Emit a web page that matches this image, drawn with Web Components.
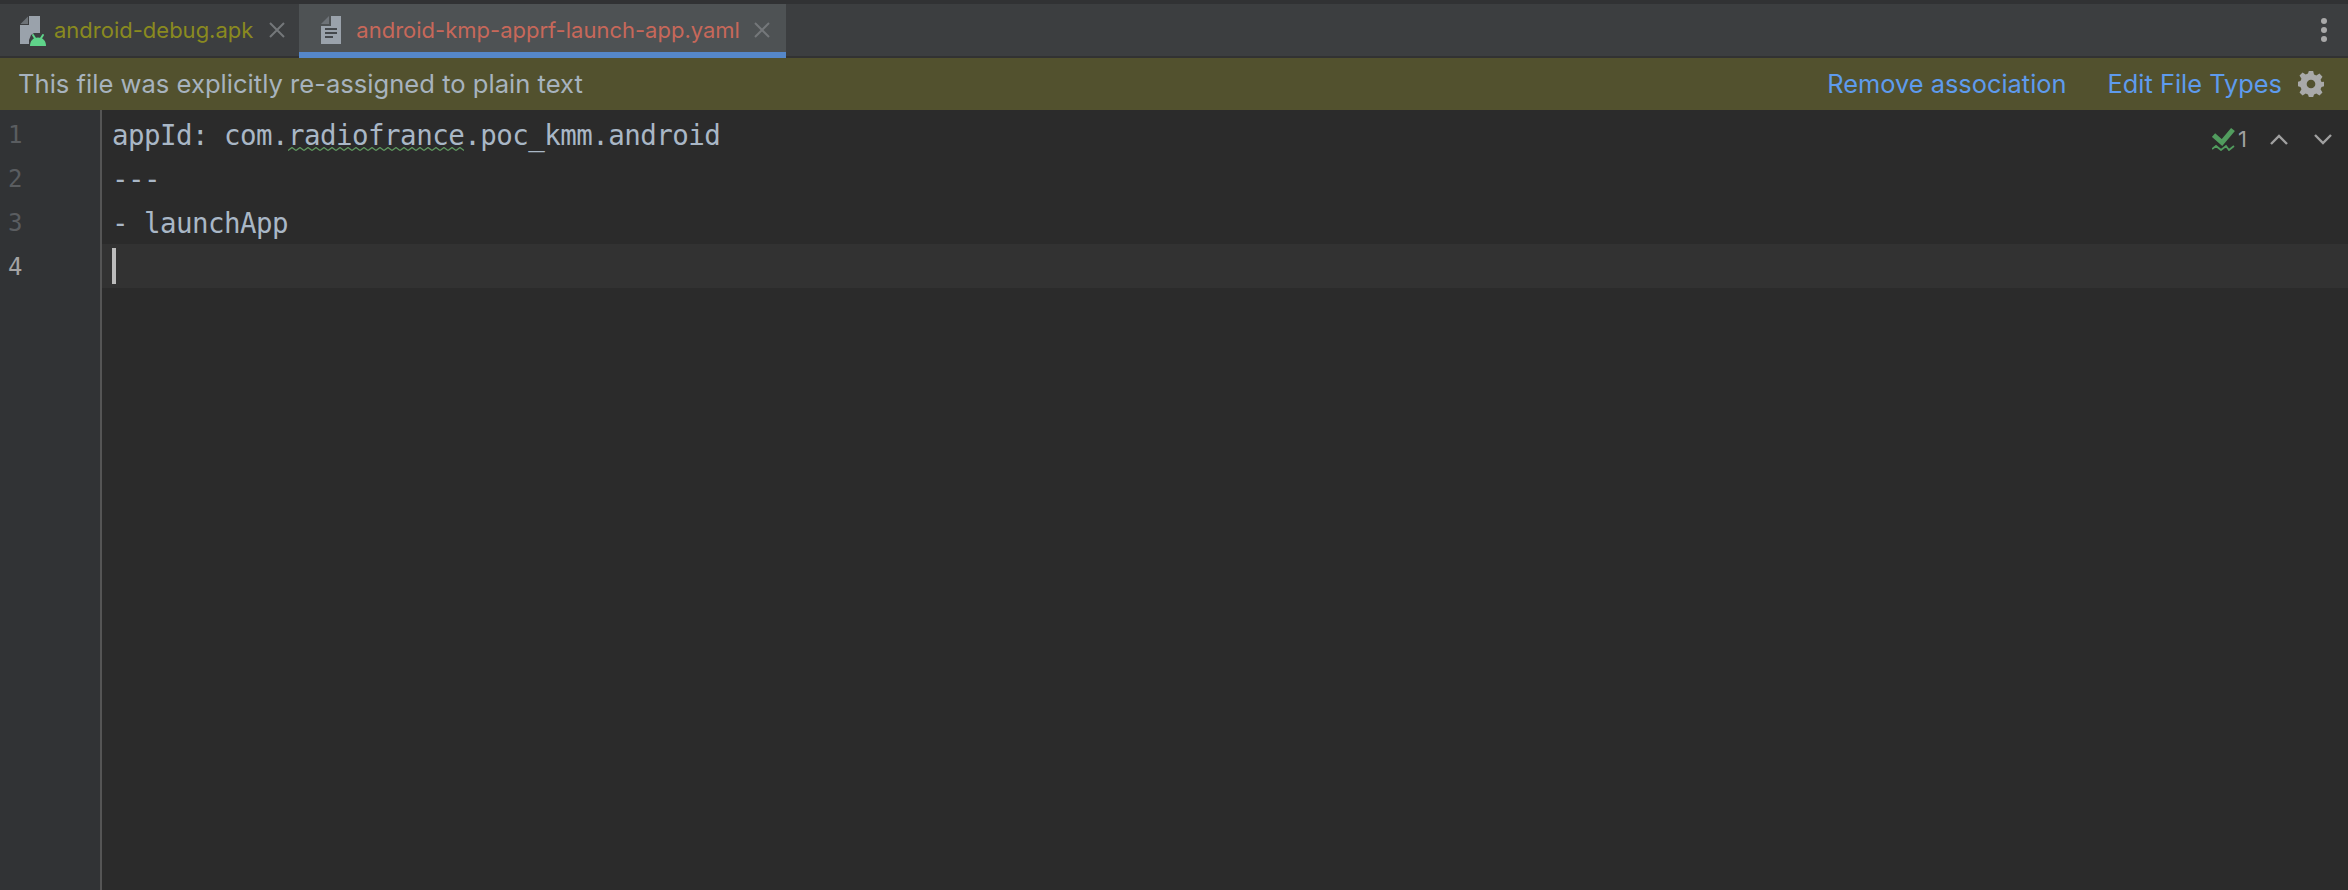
<!DOCTYPE html>
<html>
<head>
<meta charset="utf-8">
<title>android-kmp-apprf-launch-app.yaml</title>
<style>
  html, body { margin: 0; height: 100%; background: #2b2b2b; overflow: hidden; }
</style>
</head>
<body>
<ide-window>
  <ide-tab-bar>
    <ide-tab kind="apk" color="#8a8a1f">android-debug.apk</ide-tab>
    <ide-tab kind="text" color="#c7685a" active>android-kmp-apprf-launch-app.yaml</ide-tab>
  </ide-tab-bar>
  <ide-banner>
    This file was explicitly re-assigned to plain text
    <ide-link slot="actions" style="margin-right:41px">Remove association</ide-link>
    <ide-link slot="actions">Edit File Types</ide-link>
  </ide-banner>
  <ide-editor>
    <ide-line num="1">appId: com.<ide-squiggle>radiofrance</ide-squiggle>.poc_kmm.android</ide-line>
    <ide-line num="2">---</ide-line>
    <ide-line num="3">- launchApp</ide-line>
    <ide-line num="4" current></ide-line>
  </ide-editor>
</ide-window>

<script>
  const UI_FONT = "Inter, 'Open Sans', 'Liberation Sans', sans-serif"
  const CODE_FONT = "'DejaVu Sans Mono', 'Liberation Mono', monospace"

  const defineEl = (name, html) => {
    customElements.define(name, class extends HTMLElement {
      constructor() {
        super()
        this.attachShadow({ mode: 'open' }).innerHTML = html
      }
    })
  }

  defineEl('ide-window', `
    <style>
      :host { display: flex; flex-direction: column; width: 2348px; height: 890px; background: #2b2b2b; }
    </style>
    <slot></slot>
  `)

  defineEl('ide-tab-bar', `
    <style>
      :host {
        display: flex; align-items: stretch; height: 52px; flex: none;
        background: #3c3e40;
        border-top: 4px solid #313234; border-bottom: 2px solid #323232;
      }
      .more { margin-left: auto; width: 48px; display: flex; align-items: center; justify-content: center; }
    </style>
    <slot></slot>
    <div class="more">
      <svg width="8" height="26" viewBox="0 0 8 26" fill="#a9a9a9">
        <circle cx="4" cy="4" r="3"/><circle cx="4" cy="13" r="3"/><circle cx="4" cy="22" r="3"/>
      </svg>
    </div>
  `)

  const APK_ICON = `
    <svg width="26" height="30" viewBox="0 0 26 30" style="margin-top:2px">
      <path d="M0.500 8 L8 0.500 V8 Z" fill="#6e7378"/>
      <path d="M9 0 H20 V17 H14 L11 19 L9 24 V28 H0 V9 H9 Z" fill="#9aa2ab"/>
      <path d="M10 30 C10 25 13 21.500 18 21.500 C23 21.500 26 25 26 30 Z" fill="#5fd48a"/>
      <path d="M13 19 L15.500 23 M23 19 L20.500 23" stroke="#5fd48a" stroke-width="2" stroke-linecap="round"/>
    </svg>`

  const TEXT_ICON = `
    <svg width="20" height="28" viewBox="0 0 20 28">
      <path d="M0 8 L8 0 V8 Z" fill="#6e7378"/>
      <path d="M10 0 H20 V28 H0 V10 H10 Z" fill="#9aa2ab"/>
      <path d="M4 12 H16 V14 H4 Z M4 16 H16 V18 H4 Z M4 20 H12 V22 H4 Z" fill="#44484c"/>
    </svg>`

  customElements.define('ide-tab', class extends HTMLElement {
    constructor() {
      super()
      const shadow = this.attachShadow({ mode: 'open' })
      const isApk = this.getAttribute('kind') === 'apk'
      shadow.innerHTML = `
        <style>
          :host {
            display: flex; align-items: center; box-sizing: border-box;
            height: 54px; margin-bottom: -2px; padding: 0 14px 2px 20px;
            font: 400 22px/1 ${UI_FONT};
            color: ${this.getAttribute('color')};
          }
          :host([active]) {
            background: #4e5254;
            border-bottom: 6px solid #5587c9;
            padding: 4px 16px 0 22px;
          }
          .icon { display: flex; width: 34px; flex: none; }
          :host([active]) .icon { width: 35px; }
          .label { white-space: nowrap; }
          .close { margin-left: 16px; display: flex; }
          :host([active]) .close { margin-left: 14px; }
        </style>
        <span class="icon">${isApk ? APK_ICON : TEXT_ICON}</span>
        <span class="label"><slot></slot></span>
        <span class="close">
          <svg width="16" height="16" viewBox="0 0 16 16" stroke="#74777a" stroke-width="2" fill="none">
            <path d="M1 1 L15 15 M15 1 L1 15"/>
          </svg>
        </span>
      `
    }
  })

  defineEl('ide-banner', `
    <style>
      :host {
        display: flex; align-items: center; flex: none; box-sizing: border-box;
        height: 52px; padding: 0 24px 0 18px;
        background: #52512e; color: #a7b3be;
        font: 400 25.600px/1 ${UI_FONT};
      }
      .msg { white-space: nowrap; }
      .actions { margin-left: auto; display: flex; align-items: center; font-size: 25.400px; }
      svg { margin-left: 16px; }
    </style>
    <span class="msg"><slot></slot></span>
    <span class="actions">
      <slot name="actions"></slot>
      <svg width="26" height="26" viewBox="0 0 24 24" fill="#a9a9a9">
        <path fill-rule="evenodd" d="M10 0 H14 L14.800 3.300 L16.900 4.200 L19.800 2.400 L22.600 5.200 L20.800 8.100 L21.700 10.200 L24 10 V14 L21.700 14.800 L20.800 16.900 L22.600 19.800 L19.800 22.600 L16.900 20.800 L14.800 21.700 L14 24 H10 L9.200 21.700 L7.100 20.800 L4.200 22.600 L1.400 19.800 L3.200 16.900 L2.300 14.800 L0 14 V10 L2.300 9.200 L3.200 7.100 L1.400 4.200 L4.200 1.400 L7.100 3.200 L9.200 2.300 Z M12 8 A4 4 0 1 0 12 16 A4 4 0 1 0 12 8 Z"/>
      </svg>
    </span>
  `)

  defineEl('ide-link', `
    <style>
      :host { display: inline-block; color: #5e9bed; white-space: nowrap; }
    </style>
    <slot></slot>
  `)

  defineEl('ide-editor', `
    <style>
      :host {
        display: block; position: relative; flex: 1; overflow: hidden;
        background: #2b2b2b;
        padding-top: 2px;
      }
      .gutter {
        position: absolute; left: 0; top: 0; bottom: 0; width: 100px;
        background: #313335; border-right: 2px solid #555555;
      }
      .lines { position: relative; display: block; }
      .status {
        position: absolute; top: 17px; right: 16px;
        display: flex; align-items: center;
        color: #a0a0a0; font: 400 22px/1 ${UI_FONT};
      }
      .count { margin: 0 23px 0 3px; }
    </style>
    <div class="gutter"></div>
    <div class="lines"><slot></slot></div>
    <div class="status">
      <svg width="23" height="24" viewBox="0 0 23 24" fill="none">
        <path d="M1.500 8 L10 15.500 L21 2.500" stroke="#519c5e" stroke-width="5"/>
        <path d="M0 22 L4 19 L9 23 L14 19 L17 23 L22 19" stroke="#519c5e" stroke-width="1.800"/>
      </svg>
      <span class="count">1</span>
      <svg width="18" height="11" viewBox="0 0 18 11" fill="none" stroke="#a0a0a0" stroke-width="2.400" style="margin-right:26px">
        <path d="M1 10 L9 2 L17 10"/>
      </svg>
      <svg width="18" height="11" viewBox="0 0 18 11" fill="none" stroke="#a0a0a0" stroke-width="2.400">
        <path d="M1 1 L9 9 L17 1"/>
      </svg>
    </div>
  `)

  customElements.define('ide-line', class extends HTMLElement {
    constructor() {
      super()
      this.attachShadow({ mode: 'open' }).innerHTML = `
        <style>
          :host {
            display: flex; box-sizing: border-box; height: 44px; padding-top: 2px; align-items: center;
            font: 400 27.500px/42px ${CODE_FONT}; letter-spacing: -0.550px;
            color: #a9b7c6;
          }
          :host([current]) { background: linear-gradient(to right, transparent 102px, #323232 102px); }
          .num {
            width: 112px; flex: none; box-sizing: border-box; padding-left: 8px;
            color: #5a5d60; font-size: 24px; letter-spacing: 0;
          }
          :host([current]) .num { color: #a4a3a3; }
          .code { white-space: pre; }
          .caret { display: none; width: 4px; height: 36px; margin-top: -2px; background: #bbbbbb; }
          :host([current]) .caret { display: block; }
        </style><span class="num">${this.getAttribute('num')}</span><span class="caret"></span><span class="code"><slot></slot></span>`
    }
  })

  const SQUIGGLE = "data:image/svg+xml," + encodeURIComponent(
    '<svg xmlns="http://www.w3.org/2000/svg" width="8" height="4"><path d="M0 3.500 L4 .5 L8 3.500" fill="none" stroke="#5f9a60" stroke-width="1.200"/></svg>')

  defineEl('ide-squiggle', `
    <style>
      :host {
        display: inline-block; line-height: 42px; white-space: nowrap;
        background: url("${SQUIGGLE}") repeat-x left 33px;
      }
    </style>
    <slot></slot>
  `)
</script>
</body>
</html>
